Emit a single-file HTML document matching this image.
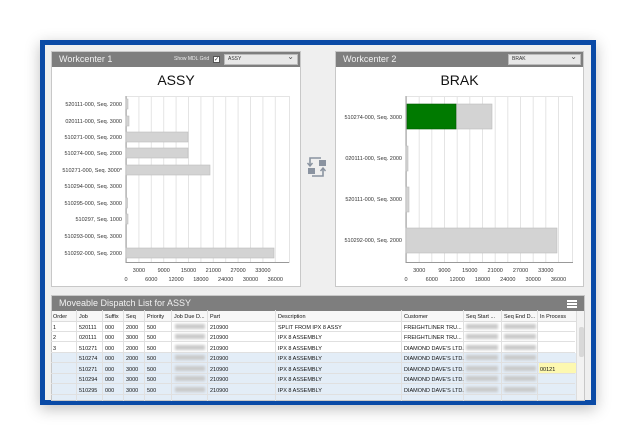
<!DOCTYPE html>
<html><head><meta charset="utf-8"><style>
*{margin:0;padding:0;box-sizing:border-box}
body{width:635px;height:445px;background:#fff;position:relative;overflow:hidden;font-family:"Liberation Sans",sans-serif}
.frame{position:absolute;left:40px;top:40px;width:556px;height:365px;border:5px solid #0a4aa6;background:#efefef;box-shadow:0 4px 14px rgba(0,0,0,.25)}
.panel{position:absolute;background:#fff;border:1px solid #c8c8c8}
.hdr{position:absolute;left:0;top:0;right:0;height:15px;background:#7e7e7e;color:#f2f2f2;font-size:9px;line-height:15px;padding-left:7px}
.sel{position:absolute;top:2px;height:11px;background:#e8e8e8;border:1px solid #bbb;font-size:5px;line-height:9px;color:#333;padding-left:3px}
.sel:after{content:"⌄";position:absolute;right:3px;top:-3px;font-size:8px;color:#555}
.t{position:absolute;font-size:5.5px;color:#222;white-space:nowrap}
.tbl{position:absolute;font-size:5.5px;color:#111}
.blur{position:absolute;height:5px;background:#c9c9c9;filter:blur(1.2px)}
</style></head><body>
<div class="frame"></div>

<!-- Workcenter 1 -->
<div class="panel" style="left:51px;top:51px;width:250px;height:236px">
 <div class="hdr">Workcenter 1
  <span style="position:absolute;left:122px;top:0;font-size:5px;color:#eee">Show MDL Grid</span>
  <span style="position:absolute;left:161px;top:4px;width:7px;height:7px;background:#fff;border:1px solid #555;font-size:6px;line-height:6px;color:#333;text-align:center">✓</span>
  <span class="sel" style="left:172px;width:74px">ASSY</span>
 </div>
 <div style="position:absolute;top:20px;width:100%;text-align:center;font-size:14px;color:#111">ASSY</div>
</div>
<svg style="position:absolute;left:0;top:0" width="635" height="445">
 <g stroke="#e4e4e4" stroke-width="1">
  <rect x="126.5" y="96.5" width="163" height="166" fill="none"/>
  <line x1="138.9" y1="96" x2="138.9" y2="262"/><line x1="151.3" y1="96" x2="151.3" y2="262"/><line x1="163.7" y1="96" x2="163.7" y2="262"/><line x1="176.1" y1="96" x2="176.1" y2="262"/><line x1="188.5" y1="96" x2="188.5" y2="262"/><line x1="200.9" y1="96" x2="200.9" y2="262"/><line x1="213.3" y1="96" x2="213.3" y2="262"/><line x1="225.7" y1="96" x2="225.7" y2="262"/><line x1="238.1" y1="96" x2="238.1" y2="262"/><line x1="250.5" y1="96" x2="250.5" y2="262"/><line x1="262.9" y1="96" x2="262.9" y2="262"/><line x1="275.3" y1="96" x2="275.3" y2="262"/>
 </g>
 <line x1="126" y1="96" x2="126" y2="263" stroke="#999"/>
 <line x1="126" y1="262.5" x2="289" y2="262.5" stroke="#999"/>
 <g fill="#d3d3d3" stroke="#bdbdbd" stroke-width="0.6">
  <rect x="126" y="99" width="2" height="10"/><rect x="126" y="116" width="3" height="10"/>
  <rect x="126" y="132" width="62" height="10"/><rect x="126" y="148" width="62" height="10"/>
  <rect x="126" y="165" width="84" height="10"/><rect x="126" y="198" width="1.5" height="10"/>
  <rect x="126" y="214" width="2" height="10"/><rect x="126" y="248" width="148" height="10"/>
 </g>
 <g font-size="5.5" fill="#333" text-anchor="end" font-family="Liberation Sans">
  <text x="122" y="106">520111-000, Seq. 2000</text><text x="122" y="123">020111-000, Seq. 3000</text>
  <text x="122" y="139">510271-000, Seq. 2000</text><text x="122" y="155">510274-000, Seq. 2000</text>
  <text x="122" y="172">510271-000, Seq. 3000*</text><text x="122" y="188">510294-000, Seq. 3000</text>
  <text x="122" y="205">510295-000, Seq. 3000</text><text x="122" y="221">510297, Seq. 1000</text>
  <text x="122" y="238">510293-000, Seq. 3000</text><text x="122" y="255">510292-000, Seq. 2000</text>
 </g>
 <g font-size="5.5" fill="#333" text-anchor="middle" font-family="Liberation Sans">
  <text x="138.9" y="272">3000</text><text x="163.7" y="272">9000</text><text x="188.5" y="272">15000</text><text x="213.3" y="272">21000</text><text x="238.1" y="272">27000</text><text x="262.9" y="272">33000</text>
  <text x="126" y="281">0</text><text x="151.3" y="281">6000</text><text x="176.1" y="281">12000</text><text x="200.9" y="281">18000</text><text x="225.7" y="281">24000</text><text x="250.5" y="281">30000</text><text x="275.3" y="281">36000</text>
 </g>
</svg>

<!-- swap icon -->
<svg style="position:absolute;left:306px;top:155px" width="22" height="24" viewBox="0 0 22 24">
 <g fill="#8a93a0" stroke="#8a93a0">
  <rect x="13" y="5" width="7" height="6" stroke="none"/><rect x="2" y="13" width="7" height="6" stroke="none"/>
  <path d="M4 10 V3 H15" fill="none" stroke-width="1.6"/><path d="M1.5 8 L4 11 L6.5 8" fill="none" stroke-width="1.4"/>
  <path d="M17 14 V21 H6" fill="none" stroke-width="1.6"/><path d="M14.5 16 L17 13 L19.5 16" fill="none" stroke-width="1.4"/>
 </g>
</svg>

<!-- Workcenter 2 -->
<div class="panel" style="left:335px;top:51px;width:249px;height:236px">
 <div class="hdr">Workcenter 2<span class="sel" style="left:172px;width:73px">BRAK</span></div>
 <div style="position:absolute;top:20px;width:100%;text-align:center;font-size:14px;color:#111">BRAK</div>
</div>
<svg style="position:absolute;left:0;top:0" width="635" height="445">
 <g stroke="#e4e4e4" stroke-width="1">
  <rect x="406.5" y="96.5" width="166" height="166" fill="none"/>
  <line x1="419.2" y1="96" x2="419.2" y2="262"/><line x1="431.8" y1="96" x2="431.8" y2="262"/><line x1="444.5" y1="96" x2="444.5" y2="262"/><line x1="457.2" y1="96" x2="457.2" y2="262"/><line x1="469.8" y1="96" x2="469.8" y2="262"/><line x1="482.5" y1="96" x2="482.5" y2="262"/><line x1="495.2" y1="96" x2="495.2" y2="262"/><line x1="507.8" y1="96" x2="507.8" y2="262"/><line x1="520.5" y1="96" x2="520.5" y2="262"/><line x1="533.2" y1="96" x2="533.2" y2="262"/><line x1="545.8" y1="96" x2="545.8" y2="262"/><line x1="558.5" y1="96" x2="558.5" y2="262"/>
 </g>
 <line x1="406" y1="96" x2="406" y2="263" stroke="#999"/>
 <line x1="406" y1="262.5" x2="573" y2="262.5" stroke="#999"/>
 <rect x="456" y="104" width="36" height="25" fill="#d3d3d3" stroke="#bdbdbd" stroke-width="0.6"/>
 <rect x="407" y="104" width="49" height="25" fill="#007a00" stroke="#005a00" stroke-width="0.6"/>
 <g fill="#d3d3d3" stroke="#bdbdbd" stroke-width="0.6">
  <rect x="406" y="146" width="2" height="25"/><rect x="406" y="187" width="3" height="25"/><rect x="406" y="228" width="151" height="25"/>
 </g>
 <g font-size="5.5" fill="#333" text-anchor="end" font-family="Liberation Sans">
  <text x="402" y="119">510274-000, Seq. 3000</text><text x="402" y="160">020111-000, Seq. 2000</text>
  <text x="402" y="201">520111-000, Seq. 3000</text><text x="402" y="242">510292-000, Seq. 2000</text>
 </g>
 <g font-size="5.5" fill="#333" text-anchor="middle" font-family="Liberation Sans">
  <text x="419.2" y="272">3000</text><text x="444.5" y="272">9000</text><text x="469.8" y="272">15000</text><text x="495.2" y="272">21000</text><text x="520.5" y="272">27000</text><text x="545.8" y="272">33000</text>
  <text x="406" y="281">0</text><text x="431.8" y="281">6000</text><text x="457.2" y="281">12000</text><text x="482.5" y="281">18000</text><text x="507.8" y="281">24000</text><text x="533.2" y="281">30000</text><text x="558.5" y="281">36000</text>
 </g>
</svg>

<!-- Dispatch list -->
<div class="panel" style="left:51px;top:295px;width:534px;height:106px;overflow:hidden">
 <div class="hdr" style="font-size:9px">Moveable Dispatch List for ASSY
  <span style="position:absolute;right:7px;top:4px;width:10px;height:1.5px;background:#fff;box-shadow:0 3px 0 #fff,0 6px 0 #fff"></span>
 </div>
 <div style="position:absolute;left:0;top:15px;width:524px;height:11px;background:#f7f7f7;border-bottom:1px solid #ddd"></div>
 <div style="position:absolute;left:0;top:57px;width:524px;height:49px;background:#e3edf7"></div>
 <div style="position:absolute;left:487px;top:67px;width:37px;height:10px;background:#fdf8b0"></div>
 <div style="position:absolute;left:524px;top:15px;width:10px;height:91px;background:#f2f2f2;border-left:1px solid #ddd"></div>
 <div style="position:absolute;left:527px;top:31px;width:5px;height:30px;background:#d8d8d8;border-radius:2px"></div>
</div>
<svg style="position:absolute;left:51px;top:310px" width="524" height="91">
 <g stroke="#e0e0e0" stroke-width="1">
  <line x1="25.5" y1="0" x2="25.5" y2="91"/><line x1="51.5" y1="0" x2="51.5" y2="91"/><line x1="72.5" y1="0" x2="72.5" y2="91"/><line x1="93.5" y1="0" x2="93.5" y2="91"/><line x1="120.5" y1="0" x2="120.5" y2="91"/><line x1="156.5" y1="0" x2="156.5" y2="91"/><line x1="224.5" y1="0" x2="224.5" y2="91"/><line x1="350.5" y1="0" x2="350.5" y2="91"/><line x1="412.5" y1="0" x2="412.5" y2="91"/><line x1="450.5" y1="0" x2="450.5" y2="91"/><line x1="486.5" y1="0" x2="486.5" y2="91"/>
  <line x1="0" y1="21.5" x2="524" y2="21.5"/><line x1="0" y1="31.5" x2="524" y2="31.5"/><line x1="0" y1="42.5" x2="524" y2="42.5"/><line x1="0" y1="52.5" x2="524" y2="52.5"/><line x1="0" y1="63.5" x2="524" y2="63.5"/><line x1="0" y1="73.5" x2="524" y2="73.5"/><line x1="0" y1="84.5" x2="524" y2="84.5"/>
 </g>
 <g font-size="5.5" fill="#111" font-family="Liberation Sans">
  <text x="2" y="8">Order</text><text x="28" y="8">Job</text><text x="54" y="8">Suffix</text><text x="75" y="8">Seq</text><text x="96" y="8">Priority</text><text x="123" y="8">Job Due D...</text><text x="159" y="8">Part</text><text x="227" y="8">Description</text><text x="353" y="8">Customer</text><text x="415" y="8">Seq Start ...</text><text x="453" y="8">Seq End D...</text><text x="489" y="8">In Process</text>
  <text x="2" y="19">1</text><text x="28" y="19">520111</text><text x="54" y="19">000</text><text x="75" y="19">2000</text><text x="96" y="19">500</text><text x="159" y="19">210900</text><text x="227" y="19">SPLIT FROM IPX 8 ASSY</text><text x="353" y="19">FREIGHTLINER TRU...</text>
  <text x="2" y="29">2</text><text x="28" y="29">020111</text><text x="54" y="29">000</text><text x="75" y="29">3000</text><text x="96" y="29">500</text><text x="159" y="29">210900</text><text x="227" y="29">IPX 8 ASSEMBLY</text><text x="353" y="29">FREIGHTLINER TRU...</text>
  <text x="2" y="40">3</text><text x="28" y="40">510271</text><text x="54" y="40">000</text><text x="75" y="40">2000</text><text x="96" y="40">500</text><text x="159" y="40">210900</text><text x="227" y="40">IPX 8 ASSEMBLY</text><text x="353" y="40">DIAMOND DAVE'S LTD.</text>
  <text x="28" y="50">510274</text><text x="54" y="50">000</text><text x="75" y="50">2000</text><text x="96" y="50">500</text><text x="159" y="50">210900</text><text x="227" y="50">IPX 8 ASSEMBLY</text><text x="353" y="50">DIAMOND DAVE'S LTD.</text>
  <text x="28" y="61">510271</text><text x="54" y="61">000</text><text x="75" y="61">3000</text><text x="96" y="61">500</text><text x="159" y="61">210900</text><text x="227" y="61">IPX 8 ASSEMBLY</text><text x="353" y="61">DIAMOND DAVE'S LTD.</text><text x="489" y="61">00121</text>
  <text x="28" y="71">510294</text><text x="54" y="71">000</text><text x="75" y="71">3000</text><text x="96" y="71">500</text><text x="159" y="71">210900</text><text x="227" y="71">IPX 8 ASSEMBLY</text><text x="353" y="71">DIAMOND DAVE'S LTD.</text>
  <text x="28" y="82">510295</text><text x="54" y="82">000</text><text x="75" y="82">3000</text><text x="96" y="82">500</text><text x="159" y="82">210900</text><text x="227" y="82">IPX 8 ASSEMBLY</text><text x="353" y="82">DIAMOND DAVE'S LTD.</text>
 </g>
</svg>
<div class="blur" style="left:175px;top:324px;width:30px"></div><div class="blur" style="left:466px;top:324px;width:32px"></div><div class="blur" style="left:504px;top:324px;width:32px"></div>
<div class="blur" style="left:175px;top:334px;width:30px"></div><div class="blur" style="left:466px;top:334px;width:32px"></div><div class="blur" style="left:504px;top:334px;width:32px"></div>
<div class="blur" style="left:175px;top:345px;width:30px"></div><div class="blur" style="left:466px;top:345px;width:32px"></div><div class="blur" style="left:504px;top:345px;width:32px"></div>
<div class="blur" style="left:175px;top:355px;width:30px"></div><div class="blur" style="left:466px;top:355px;width:32px"></div><div class="blur" style="left:504px;top:355px;width:32px"></div>
<div class="blur" style="left:175px;top:366px;width:30px"></div><div class="blur" style="left:466px;top:366px;width:32px"></div><div class="blur" style="left:504px;top:366px;width:32px"></div>
<div class="blur" style="left:175px;top:376px;width:30px"></div><div class="blur" style="left:466px;top:376px;width:32px"></div><div class="blur" style="left:504px;top:376px;width:32px"></div>
<div class="blur" style="left:175px;top:387px;width:30px"></div><div class="blur" style="left:466px;top:387px;width:32px"></div><div class="blur" style="left:504px;top:387px;width:32px"></div>
</body></html>
